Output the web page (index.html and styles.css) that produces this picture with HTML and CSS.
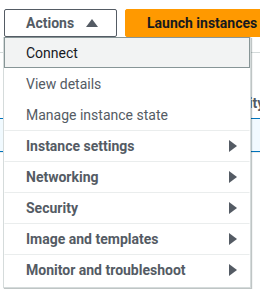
FILE: index.html
```html
<!DOCTYPE html>
<html lang="en">
<head>
  <meta charset="UTF-8">
  <title>Actions menu</title>
  <link rel="stylesheet" href="styles.css">
</head>
<body>
  <!-- Toolbar -->
  <div class="toolbar">
    <button class="btn btn_actions">Actions <span class="caret_up"></span></button>
    <button class="btn btn_launch">Launch instances</button>
  </div>

  <!-- Table behind the menu -->
  <div class="table">
    <div class="table_head"><span class="col_title">Availability</span></div>
    <div class="table_row selected"></div>
    <div class="table_row"></div>
  </div>

  <!-- Dropdown menu -->
  <ul class="menu">
    <li class="menu_item highlighted">Connect</li>
    <li class="menu_item">View details</li>
    <li class="menu_item">Manage instance state</li>
    <li class="menu_item group">Instance settings <span class="caret_right"></span></li>
    <li class="menu_item group">Networking <span class="caret_right"></span></li>
    <li class="menu_item group">Security <span class="caret_right"></span></li>
    <li class="menu_item group">Image and templates <span class="caret_right"></span></li>
    <li class="menu_item group">Monitor and troubleshoot <span class="caret_right"></span></li>
  </ul>
</body>
</html>
```

FILE: styles.css
```css
/* Page */
body {
  margin: 0;
  background-color: #ffffff;
  font-family: Roboto, 'Liberation Sans', sans-serif;
  font-size: 14px;
  overflow: hidden;
  position: relative;
  height: 289px;
}

/* Toolbar */
.toolbar {
  display: flex;
  gap: 8px;
  padding: 9px 0 0 4px;
  white-space: nowrap;
}
.btn {
  height: 28px;
  border-radius: 2px;
  font-family: inherit;
  font-size: 14px;
  font-weight: bold;
  padding: 0;
  display: flex;
  align-items: center;
  flex-shrink: 0;
}
.btn_actions {
  width: 113px;
  background-color: #ffffff;
  border: 1px solid #545b64;
  color: #545b64;
  padding-left: 21px;
  gap: 12px;
}
.caret_up {
  width: 0;
  height: 0;
  border-left: 6px solid transparent;
  border-right: 6px solid transparent;
  border-bottom: 8px solid #545b64;
}
.btn_launch {
  background-color: #ff9900;
  border: 1px solid #ff9900;
  color: #16191f;
  padding: 0 20px 0 21px;
}

/* Table */
.table {
  margin-top: 15px;
}
.table_head {
  border-top: 1px solid #d5dbdb;
  height: 66px;
  display: flex;
  align-items: center;
  overflow: hidden;
  padding: 35px 0 0 195px;
  box-sizing: border-box;
}
.col_title {
  font-weight: bold;
  color: #545b64;
  white-space: nowrap;
}
.table_row {
  height: 32px;
  border-top: 1px solid #eaeded;
}
.table_row.selected {
  background-color: #f1faff;
  border-top: 1px solid #0073bb;
  border-bottom: 1px solid #0073bb;
}

/* Menu */
.menu {
  position: absolute;
  top: 37px;
  left: 3px;
  width: 246px;
  margin: 0;
  padding: 0 0 2px;
  list-style: none;
  background-color: #ffffff;
  border: 1px solid #d5dbdb;
  border-top: none;
  box-shadow: 1px 1px 1px rgba(0, 22, 22, 0.25);
}
.menu_item {
  height: 31px;
  display: flex;
  align-items: center;
  padding: 0 12px 0 21px;
  color: #545b64;
  box-sizing: border-box;
  border: 1px solid transparent;
}
.menu_item.highlighted {
  background-color: #f2f3f3;
  border-color: #879596;
  color: #16191f;
}
.menu_item.group {
  font-weight: bold;
  justify-content: space-between;
  border-top: 1px solid #eaeded;
}
.caret_right {
  width: 0;
  height: 0;
  border-top: 6px solid transparent;
  border-bottom: 6px solid transparent;
  border-left: 8px solid #545b64;
}
```
